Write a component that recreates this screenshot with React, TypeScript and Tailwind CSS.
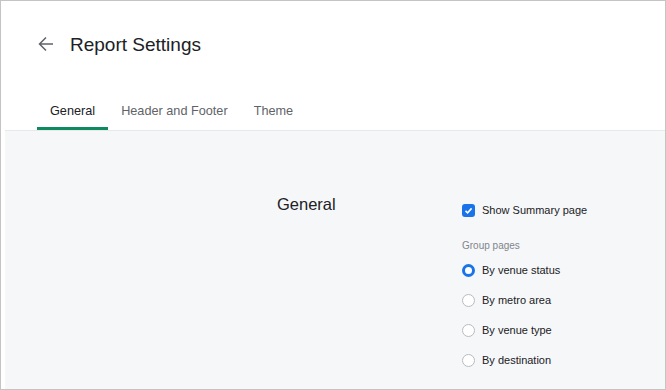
import { useState } from 'react'

const options = ['By venue status', 'By metro area', 'By venue type', 'By destination']
const tabs = ['General', 'Header and Footer', 'Theme']

export default function App() {
  const [tab, setTab] = useState('General')
  const [summary, setSummary] = useState(true)
  const [group, setGroup] = useState(options[0])

  return (
    <div
      className="flex h-[390px] w-[666px] flex-col overflow-hidden border border-[#c4c4c4] bg-white text-[#202124]"
      style={{ fontFamily: '"Liberation Sans", Arial, sans-serif' }}
    >
      {/* Header */}
      <div className="flex h-[86px] shrink-0 items-center pl-[37px]">
        <button className="grid h-[16px] w-[16px] place-items-center text-[#5f6368]" title="Back">
          <svg width="16" height="16" viewBox="0 0 16 16" fill="none">
            <path d="M15 8H1.8M8 1.5L1.5 8L8 14.5" stroke="currentColor" strokeWidth="1.5" />
          </svg>
        </button>
        <h1 className="ml-[16px] text-[19px] leading-none">Report Settings</h1>
      </div>

      {/* Tabs */}
      <div className="flex h-[43px] shrink-0 items-stretch pl-[36px]">
        {tabs.map((t) => (
          <button
            key={t}
            onClick={() => setTab(t)}
            className={`relative flex items-center px-[13px] pt-[7px] text-[12.7px] ${
              t === tab ? 'text-[#202124]' : 'text-[#5f6368]'
            }`}
          >
            {t}
            {t === tab && <span className="absolute bottom-0 left-0 right-0 h-[3px] bg-[#0f8a5f]" />}
          </button>
        ))}
      </div>

      {/* Content */}
      <div className="ml-[4px] flex flex-1 border-t border-[#e6e8eb] bg-[#f6f7f9] pl-[272px] pt-[63px]">
        <h2 className="w-[185px] text-[16.5px] leading-[20px]">General</h2>
        <div className="flex flex-col">
          <label className="mt-[6px] flex h-[20px] items-center gap-[7px] text-[11px]">
            <input
              type="checkbox"
              checked={summary}
              onChange={(e) => setSummary(e.target.checked)}
              className="sr-only"
            />
            <span
              className={`grid h-[13px] w-[13px] place-items-center rounded-[3px] ${
                summary ? 'bg-[#1a73e8]' : 'border border-[#9aa0a6] bg-white'
              }`}
            >
              {summary && (
                <svg width="9" height="9" viewBox="0 0 9 9" fill="none">
                  <path d="M1.5 4.8L3.6 6.8L7.6 2.4" stroke="white" strokeWidth="1.6" />
                </svg>
              )}
            </span>
            Show Summary page
          </label>
          <div className="mt-[19px] text-[10px] leading-[14px] text-[#80868b]">Group pages</div>
          <div className="mt-[2px] flex flex-col">
            {options.map((o) => (
              <label key={o} className="flex h-[30px] items-center gap-[7px] text-[11px]">
                <input type="radio" name="group" checked={group === o} onChange={() => setGroup(o)} className="sr-only" />
                <span
                  className={`block h-[13px] w-[13px] rounded-full ${
                    group === o ? 'border-[3.5px] border-[#1a73e8] bg-white' : 'border border-[#b7bbc0] bg-white'
                  }`}
                />
                {o}
              </label>
            ))}
          </div>
        </div>
      </div>
    </div>
  )
}
